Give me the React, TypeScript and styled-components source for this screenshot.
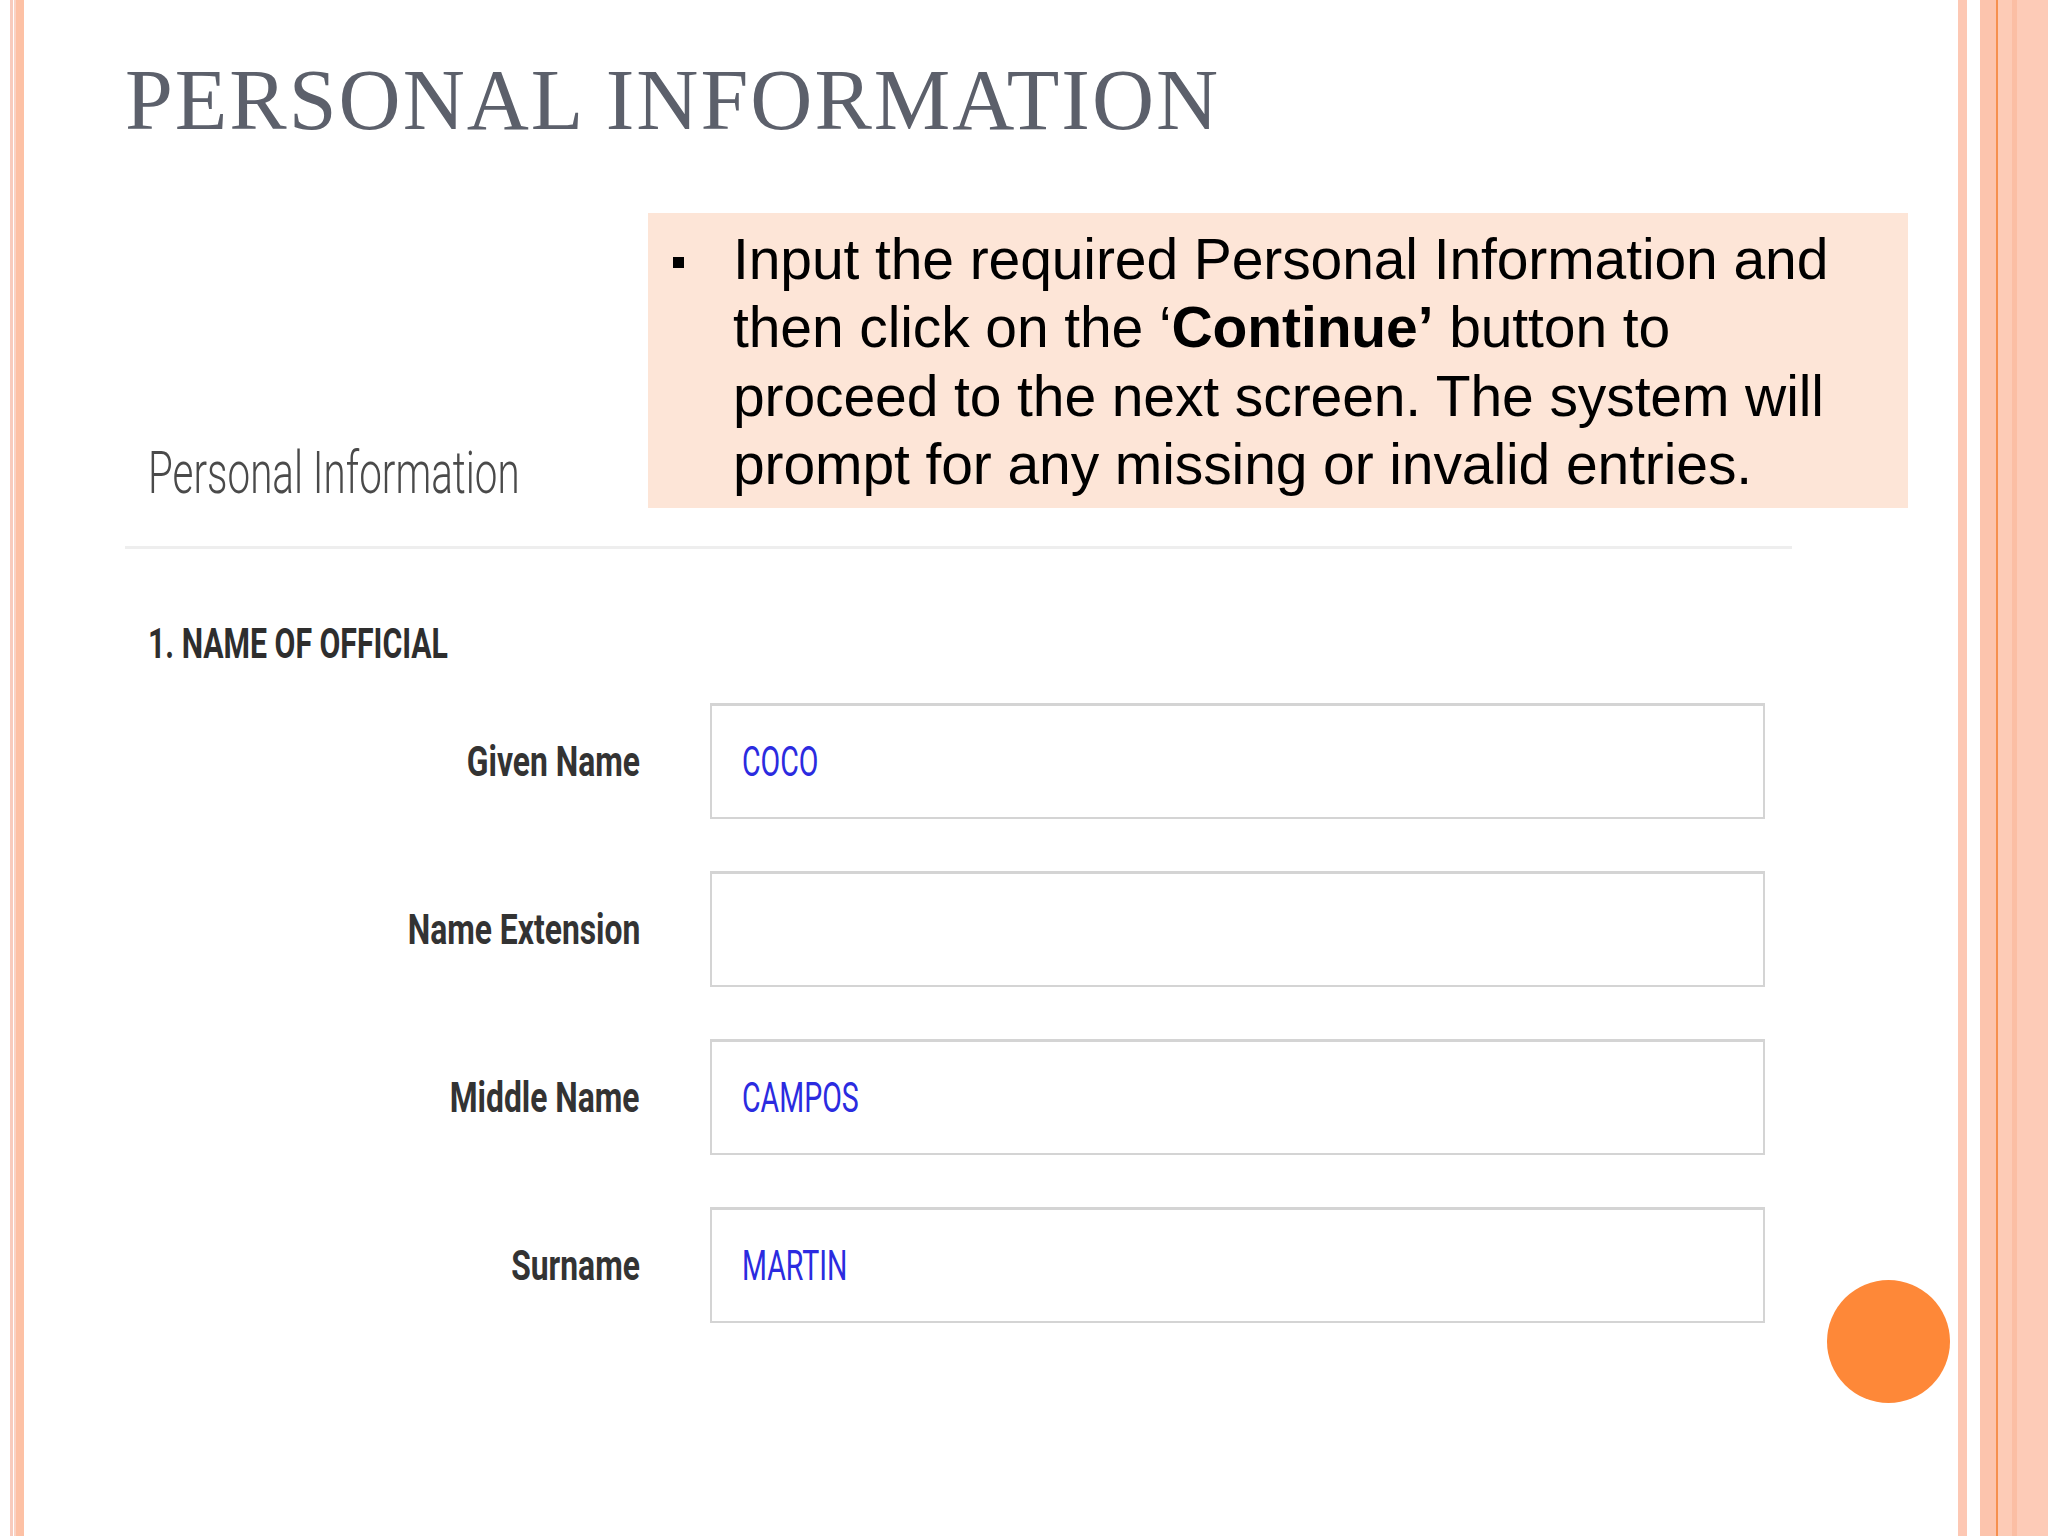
import styled, { createGlobalStyle } from 'styled-components';

const GlobalStyle = createGlobalStyle`
  html, body {
    margin: 0;
    padding: 0;
    background: #ffffff;
  }
  body {
    width: 2048px;
    height: 1536px;
    overflow: hidden;
  }
`;

const Slide = styled.div`
  position: relative;
  display: flex;
  width: 2048px;
  height: 1536px;
  background: #ffffff;
`;

const LeftRail = styled.div`
  flex: none;
  width: 24px;
  background: linear-gradient(
    to right,
    #ffffff 0 10px,
    #f8cbbd 10px 13px,
    #ffffff 13px 14px,
    #fad3c5 14px 16px,
    #fdc1a5 16px 24px
  );
`;

const RightRail = styled.div`
  flex: none;
  width: 90px;
  background: linear-gradient(
    to right,
    #fdc8b4 0 9px,
    #ffffff 9px 22px,
    #fcc4ad 22px 38px,
    #f6904e 38px 40px,
    #fdcbb6 40px 54px,
    #fbbea4 54px 59px,
    #fdcbb7 59px 90px
  );
`;

const Content = styled.main`
  flex: 1;
  display: flex;
  flex-direction: column;
  padding: 57px 0 0 101px;
`;

const Title = styled.h1`
  margin: 0;
  font-family: 'Liberation Serif', 'Times New Roman', serif;
  font-size: 86px;
  line-height: 86px;
  font-weight: 400;
  letter-spacing: 2px;
  color: #5c606b;
`;

const Narrow = styled.span<{ $scale: number; $origin?: string }>`
  display: inline-block;
  white-space: nowrap;
  transform: scaleX(${(p) => p.$scale});
  transform-origin: ${(p) => p.$origin || 'left'} center;
`;

const FormPanel = styled.section`
  display: flex;
  flex-direction: column;
  width: 1667px;
  margin-top: 300px;
`;

const FormHeading = styled.h2`
  margin: 0;
  padding-left: 23px;
  font-family: Roboto, 'Liberation Sans', sans-serif;
  font-size: 59px;
  line-height: 59px;
  font-weight: 300;
  color: #4a4a4a;
`;

const Divider = styled.hr`
  margin: 44px 0 0;
  height: 3px;
  border: none;
  background: #eeeeee;
`;

const SectionTitle = styled.h3`
  margin: 74px 0 0;
  padding-left: 23px;
  font-family: Roboto, 'Liberation Sans', sans-serif;
  font-size: 42px;
  line-height: 42px;
  font-weight: 700;
  color: #2e2e2e;
`;

const Rows = styled.div`
  display: flex;
  flex-direction: column;
  gap: 52px;
  margin-top: 38px;
`;

const Row = styled.div`
  display: grid;
  grid-template-columns: 515px 1055px;
  column-gap: 70px;
  align-items: center;
  height: 116px;
`;

const Label = styled.label`
  text-align: right;
  font-family: Roboto, 'Liberation Sans', sans-serif;
  font-size: 43px;
  line-height: 43px;
  font-weight: 700;
  color: #333333;
`;

const InputBox = styled.div`
  box-sizing: border-box;
  display: flex;
  align-items: center;
  height: 116px;
  padding-left: 30px;
  border: 2px solid #d4d4d4;
  border-top-width: 3px;
  background: #ffffff;
`;

const Value = styled.span`
  font-family: Roboto, 'Liberation Sans', sans-serif;
  font-size: 42px;
  line-height: 42px;
  font-weight: 400;
  color: #2b2be0;
`;

const Callout = styled.aside`
  position: absolute;
  left: 648px;
  top: 213px;
  box-sizing: border-box;
  display: flex;
  align-items: flex-start;
  width: 1260px;
  height: 295px;
  padding: 12px 0 0 25px;
  background: #fde5d7;
`;

const Bullet = styled.span`
  flex: none;
  width: 11px;
  height: 11px;
  margin: 32px 49px 0 0;
  background: #000000;
`;

const CalloutText = styled.p`
  margin: 0;
  font-family: 'Liberation Sans', Arial, sans-serif;
  font-size: 57px;
  line-height: 68.3px;
  letter-spacing: -0.1px;
  white-space: nowrap;
  color: #000000;

  strong {
    font-weight: 700;
  }
`;

const Dot = styled.div`
  position: absolute;
  left: 1827px;
  top: 1280px;
  width: 123px;
  height: 123px;
  border-radius: 50%;
  background: #fe8838;
`;

const fields = [
  { label: 'Given Name', value: 'COCO' },
  { label: 'Name Extension', value: '' },
  { label: 'Middle Name', value: 'CAMPOS' },
  { label: 'Surname', value: 'MARTIN' },
];

const App = () => {
  return (
    <>
      <GlobalStyle />
      <Slide>
        <LeftRail />
        <Content>
          <Title>PERSONAL INFORMATION</Title>
          <FormPanel>
            <FormHeading>
              <Narrow $scale={0.684}>Personal Information</Narrow>
            </FormHeading>
            <Divider />
            <SectionTitle>
              <Narrow $scale={0.72}>1. NAME OF OFFICIAL</Narrow>
            </SectionTitle>
            <Rows>
              {fields.map((f) => (
                <Row key={f.label}>
                  <Label>
                    <Narrow $scale={0.74} $origin="right">
                      {f.label}
                    </Narrow>
                  </Label>
                  <InputBox>
                    <Value>
                      <Narrow $scale={0.68}>{f.value}</Narrow>
                    </Value>
                  </InputBox>
                </Row>
              ))}
            </Rows>
          </FormPanel>
        </Content>
        <RightRail />
        <Callout>
          <Bullet />
          <CalloutText>
            Input the required Personal Information and
            <br />
            then click on the ‘<strong>Continue’</strong> button to
            <br />
            proceed to the next screen. The system will
            <br />
            prompt for any missing or invalid entries.
          </CalloutText>
        </Callout>
        <Dot />
      </Slide>
    </>
  );
};

export default App;
